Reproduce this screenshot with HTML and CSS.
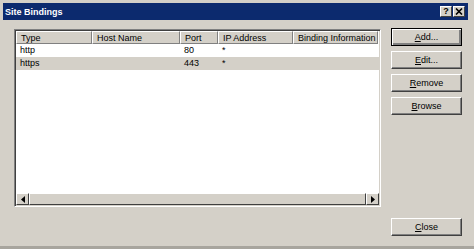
FILE: index.html
```html
<!DOCTYPE html>
<html lang="en">
<head>
    <meta charset="UTF-8">
    <title>Site Bindings</title>
    <link rel="stylesheet" href="styles.css">
</head>
<body>
    <div class="window">
        <div class="titlebar">
            <span class="title">Site Bindings</span>
            <div class="title-buttons">
                <span class="tbtn help">?</span>
                <span class="tbtn close-x">
                    <svg width="8" height="7" viewBox="0 0 8 7"><path d="M1 0.5 L7 6.5 M7 0.5 L1 6.5" stroke="#000" stroke-width="1.6"/></svg>
                </span>
            </div>
        </div>

        <div class="content">
            <div class="main">
                <div class="listview">
                    <div class="header">
                        <div class="col c-type">Type</div>
                        <div class="col c-host">Host Name</div>
                        <div class="col c-port">Port</div>
                        <div class="col c-ip">IP Address</div>
                        <div class="col c-info">Binding Information</div>
                    </div>
                    <div class="row">
                        <div class="cell c-type">http</div>
                        <div class="cell c-host"></div>
                        <div class="cell c-port">80</div>
                        <div class="cell c-ip">*</div>
                        <div class="cell c-info"></div>
                    </div>
                    <div class="row selected">
                        <div class="cell c-type">https</div>
                        <div class="cell c-host"></div>
                        <div class="cell c-port">443</div>
                        <div class="cell c-ip">*</div>
                        <div class="cell c-info"></div>
                    </div>
                    <div class="spacer"></div>
                    <div class="hscroll">
                        <div class="arrow"><svg width="4" height="7" viewBox="0 0 4 7"><path d="M4 0 L0 3.5 L4 7 Z" fill="#000"/></svg></div>
                        <div class="thumb"></div>
                        <div class="arrow"><svg width="4" height="7" viewBox="0 0 4 7"><path d="M0 0 L4 3.5 L0 7 Z" fill="#000"/></svg></div>
                    </div>
                </div>

                <div class="actions">
                    <button class="btn default"><u>A</u>dd...</button>
                    <button class="btn"><u>E</u>dit...</button>
                    <button class="btn"><u>R</u>emove</button>
                    <button class="btn"><u>B</u>rowse</button>
                </div>
            </div>

            <div class="footer">
                <button class="btn"><u>C</u>lose</button>
            </div>
        </div>
    </div>
</body>
</html>
```

FILE: styles.css
```css
* {
    box-sizing: border-box;
    font-family: "Liberation Sans", Arial, sans-serif;
}
body {
    margin: 0;
    background: #d4d0c8;
}
.window {
    width: 474px;
    height: 249px;
    background: #d4d0c8;
    padding: 3px 6px 0 3px;
    border-bottom: 3px solid #a8a59e;
    display: flex;
    flex-direction: column;
}
.titlebar {
    height: 17px;
    background: #0c2a6e;
    display: flex;
    align-items: center;
    justify-content: space-between;
    padding: 0 3px 0 2px;
}
.title {
    color: #fff;
    font-weight: bold;
    font-size: 9px;
}
.title-buttons {
    display: flex;
    gap: 1px;
}
.tbtn {
    width: 12px;
    height: 11px;
    background: #d4d0c8;
    border-top: 1px solid #fff;
    border-left: 1px solid #fff;
    border-right: 1px solid #404040;
    border-bottom: 1px solid #404040;
    display: flex;
    align-items: center;
    justify-content: center;
    font-size: 9px;
    font-weight: bold;
    line-height: 1;
    color: #000;
}
.content {
    flex: 1;
    display: flex;
    flex-direction: column;
    padding: 8px 6px 0 11px;
}
.main {
    display: flex;
    gap: 10px;
}
.listview {
    width: 367px;
    height: 178px;
    margin-top: 1px;
    background: #fff;
    border-top: 1px solid #808080;
    border-left: 1px solid #808080;
    border-right: 1px solid #fff;
    border-bottom: 1px solid #fff;
    box-shadow: inset 1px 1px 0 #404040, inset -1px -1px 0 #d4d0c8;
    padding: 1px;
    display: flex;
    flex-direction: column;
}
.header, .row {
    display: flex;
}
.col {
    height: 13px;
    background: #d4d0c8;
    font-size: 9px;
    line-height: 12px;
    padding-left: 4px;
    border-top: 1px solid #fff;
    border-left: 1px solid #fff;
    border-right: 1px solid #808080;
    border-bottom: 1px solid #808080;
    color: #000;
    white-space: nowrap;
    overflow: hidden;
}
.c-type { width: 76px; }
.c-host { width: 88px; }
.c-port { width: 38px; }
.c-ip { width: 75px; }
.c-info { width: 85px; }
.row {
    height: 13px;
}
.cell {
    font-size: 9px;
    line-height: 13px;
    padding-left: 4px;
    color: #000;
}
.row.selected {
    background: #d4d0c8;
}
.spacer {
    flex: 1;
}
.hscroll {
    height: 12px;
    display: flex;
    background: #ece9e4;
}
.arrow {
    width: 13px;
    height: 12px;
    background: #d4d0c8;
    border-top: 1px solid #fff;
    border-left: 1px solid #fff;
    border-right: 1px solid #404040;
    border-bottom: 1px solid #404040;
    display: flex;
    align-items: center;
    justify-content: center;
}
.thumb {
    flex: 1;
    background: #d4d0c8;
    border-top: 1px solid #fff;
    border-left: 1px solid #fff;
    border-right: 1px solid #404040;
    border-bottom: 1px solid #404040;
}
.actions {
    display: flex;
    flex-direction: column;
    gap: 5px;
}
.btn {
    width: 71px;
    height: 18px;
    padding: 0;
    background: #d4d0c8;
    border-top: 1px solid #fff;
    border-left: 1px solid #fff;
    border-right: 1px solid #404040;
    border-bottom: 1px solid #404040;
    box-shadow: inset -1px -1px 0 #808080;
    font-size: 9px;
    color: #000;
}
.btn.default {
    border: 1px solid #000;
    box-shadow: inset 1px 1px 0 #fff, inset -2px -2px 0 #808080;
}
.footer {
    display: flex;
    justify-content: flex-end;
    margin-top: 11px;
}
```
